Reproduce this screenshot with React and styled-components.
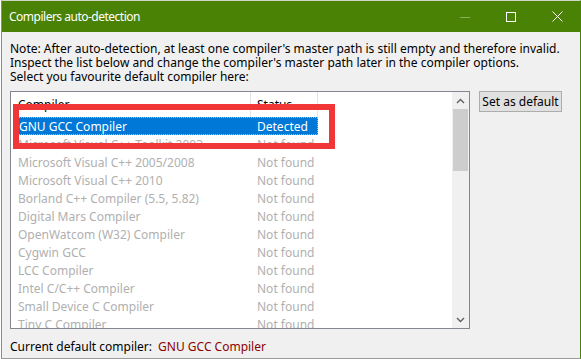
import React from "react";
import styled, { createGlobalStyle } from "styled-components";

const Global = createGlobalStyle`
  html, body { margin: 0; padding: 0; background: #ffffff; }
  body { font-family: "Noto Sans", "Liberation Sans", sans-serif; }
`;

const Window = styled.div`
  box-sizing: border-box;
  width: 580px;
  height: 359px;
  margin-left: 1px;
  border-left: 1px solid #8c8c8c;
  border-right: 1px solid #4a8206;
  border-bottom: 1px solid #9a9a9a;
  border-top: 1px solid #cfd8c4;
  background: #f0f0f0;
  display: flex;
  flex-direction: column;
  overflow: hidden;
`;

const TitleBar = styled.div`
  height: 31px;
  flex: none;
  background: #4a8206;
  display: flex;
  align-items: center;
  padding-left: 7px;
  color: #ffffff;
  font-size: 12px;
  letter-spacing: -0.5px;
`;

const Title = styled.div`
  flex: 1;
  margin-top: -1px;
`;

const Controls = styled.div`
  display: flex;
  height: 100%;
`;

const CtrlBtn = styled.div`
  width: 46px;
  height: 100%;
  display: flex;
  align-items: center;
  justify-content: center;
  opacity: ${(p) => (p.$dim ? 0.35 : 1)};
`;

const Body = styled.div`
  flex: 1;
  display: flex;
  flex-direction: column;
  padding: 10px 0 0 8px;
  font-size: 12px;
  color: #000;
`;

const Note = styled.div`
  line-height: 14px;
  white-space: nowrap;
`;

const MainRow = styled.div`
  display: flex;
  align-items: flex-start;
  margin-top: 7px;
  gap: 9px;
`;

const ListWrap = styled.div`
  position: relative;
`;

const ListBox = styled.div`
  box-sizing: border-box;
  width: 460px;
  height: 238px;
  border: 1px solid #828790;
  background: #ffffff;
  display: flex;
  overflow: hidden;
`;

const ListInner = styled.div`
  flex: 1;
  display: flex;
  flex-direction: column;
  overflow: hidden;
`;

const Header = styled.div`
  height: 25px;
  flex: none;
  display: grid;
  grid-template-columns: 240px 67px 1fr;
`;

const HeadCell = styled.div`
  padding-left: ${(p) => p.$pl ?? 7}px;
  display: flex;
  align-items: center;
  border-right: ${(p) => (p.$last ? "none" : "1px solid #e5e5e5")};
  color: #000;
`;

const Row = styled.div`
  height: 18px;
  flex: none;
  display: grid;
  grid-template-columns: 240px 67px 1fr;
  align-items: center;
  color: ${(p) => (p.$sel ? "#ffffff" : "#b0b0b0")};
`;

const SelBand = styled.div`
  grid-column: 1 / 3;
  grid-row: 1;
  margin-left: 7px;
  height: 18px;
  box-sizing: border-box;
  background: #0078d7;
  border: 1px dotted #8fc3ef;
`;

const Cell = styled.div`
  grid-row: 1;
  grid-column: ${(p) => p.$col};
  padding-left: ${(p) => p.$pl}px;
  white-space: nowrap;
  position: relative;
`;

const ScrollBar = styled.div`
  width: 17px;
  flex: none;
  background: #f0f0f0;
  display: flex;
  flex-direction: column;
`;

const Arrow = styled.div`
  height: 17px;
  display: flex;
  align-items: center;
  justify-content: center;
`;

const Track = styled.div`
  flex: 1;
  display: flex;
  flex-direction: column;
`;

const Thumb = styled.div`
  height: 62px;
  background: #cdcdcd;
  margin: 0 1px;
`;

const Button = styled.div`
  box-sizing: border-box;
  width: 83px;
  height: 21px;
  border: 1px solid #adadad;
  background: #e1e1e1;
  display: flex;
  align-items: center;
  justify-content: center;
  white-space: nowrap;
`;

const Annotation = styled.div`
  position: absolute;
  left: 3px;
  top: 13px;
  width: 322px;
  height: 45px;
  box-sizing: border-box;
  border: 6px solid #f03636;
  pointer-events: none;
`;

const Footer = styled.div`
  margin-top: 11px;
  line-height: 14px;
  display: flex;
  gap: 6px;
`;

const Current = styled.span`
  color: #8b0000;
`;

const rows = [
  "Microsoft Visual C++ Toolkit 2003",
  "Microsoft Visual C++ 2005/2008",
  "Microsoft Visual C++ 2010",
  "Borland C++ Compiler (5.5, 5.82)",
  "Digital Mars Compiler",
  "OpenWatcom (W32) Compiler",
  "Cygwin GCC",
  "LCC Compiler",
  "Intel C/C++ Compiler",
  "Small Device C Compiler",
  "Tiny C Compiler",
];

export default function App() {
  return (
    <>
      <Global />
      <Window>
        <TitleBar>
          <Title>Compilers auto-detection</Title>
          <Controls>
            <CtrlBtn $dim>
              <svg width="10" height="10" viewBox="0 0 10 10">
                <path d="M0 5.5h10" stroke="#fff" strokeWidth="1" />
              </svg>
            </CtrlBtn>
            <CtrlBtn>
              <svg width="10" height="10" viewBox="0 0 10 10">
                <rect x="0.5" y="0.5" width="9" height="9" fill="none" stroke="#fff" strokeWidth="1" />
              </svg>
            </CtrlBtn>
            <CtrlBtn>
              <svg width="11" height="11" viewBox="0 0 11 11">
                <path d="M0.5 0.5L10.5 10.5M10.5 0.5L0.5 10.5" stroke="#fff" strokeWidth="1" />
              </svg>
            </CtrlBtn>
          </Controls>
        </TitleBar>
        <Body>
          <Note>
            Note: After auto-detection, at least one compiler's master path is still empty and therefore invalid.
            <br />
            Inspect the list below and change the compiler's master path later in the compiler options.
            <br />
            Select you favourite default compiler here:
          </Note>
          <MainRow>
            <ListWrap>
              <ListBox>
                <ListInner>
                  <Header>
                    <HeadCell>Compiler</HeadCell>
                    <HeadCell $pl={6}>Status</HeadCell>
                    <HeadCell $last />
                  </Header>
                  <Row $sel>
                    <SelBand />
                    <Cell $col={1} $pl={8}>GNU GCC Compiler</Cell>
                    <Cell $col={2} $pl={6}>Detected</Cell>
                  </Row>
                  {rows.map((r) => (
                    <Row key={r}>
                      <Cell $col={1} $pl={7}>{r}</Cell>
                      <Cell $col={2} $pl={6}>Not found</Cell>
                    </Row>
                  ))}
                </ListInner>
                <ScrollBar>
                  <Arrow>
                    <svg width="9" height="6" viewBox="0 0 9 6">
                      <path d="M1 5L4.5 1.5L8 5" fill="none" stroke="#606060" strokeWidth="1.4" />
                    </svg>
                  </Arrow>
                  <Track>
                    <Thumb />
                  </Track>
                  <Arrow>
                    <svg width="9" height="6" viewBox="0 0 9 6">
                      <path d="M1 1L4.5 4.5L8 1" fill="none" stroke="#606060" strokeWidth="1.4" />
                    </svg>
                  </Arrow>
                </ScrollBar>
              </ListBox>
              <Annotation />
            </ListWrap>
            <Button>Set as default</Button>
          </MainRow>
          <Footer>
            <span>Current default compiler:</span>
            <Current>GNU GCC Compiler</Current>
          </Footer>
        </Body>
      </Window>
    </>
  );
}
